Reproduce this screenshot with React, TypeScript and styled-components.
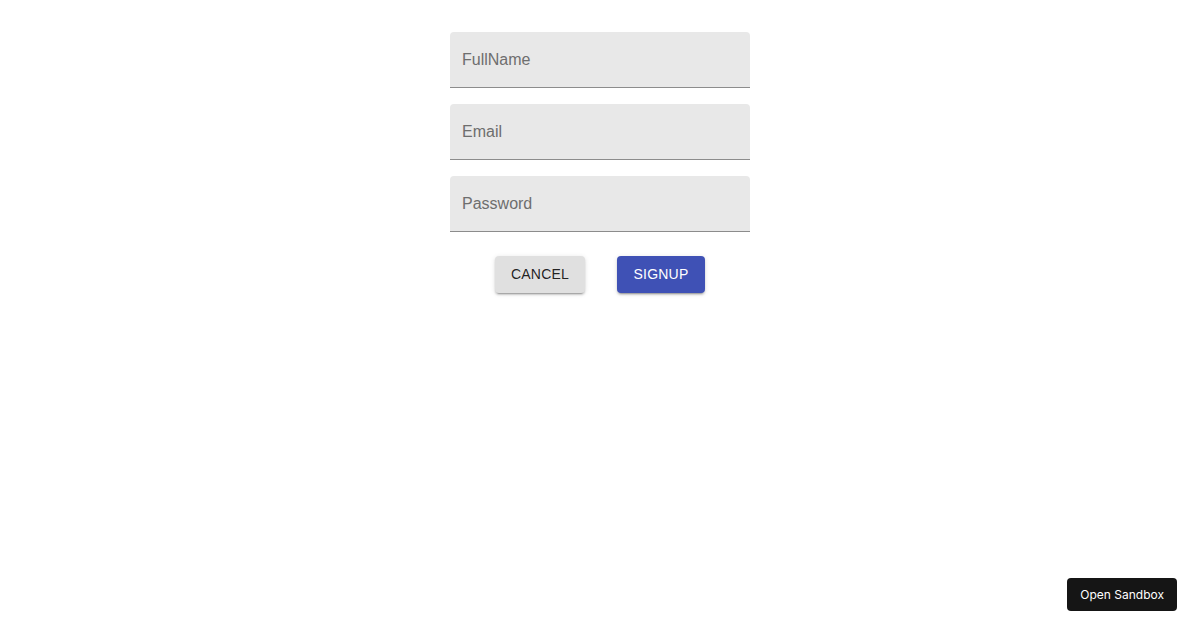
import React from "react";
import styled, { createGlobalStyle } from "styled-components";

const GlobalStyle = createGlobalStyle`
  html, body {
    margin: 0;
    padding: 0;
    background: #fff;
    font-family: "Liberation Sans", Arial, Helvetica, sans-serif;
  }
`;

const Page = styled.div`
  width: 1200px;
  height: 630px;
  position: relative;
  display: flex;
  flex-direction: column;
  align-items: center;
  padding-top: 32px;
  box-sizing: border-box;
`;

const Form = styled.form`
  width: 300px;
  display: flex;
  flex-direction: column;
  gap: 16px;
`;

const Field = styled.div`
  height: 56px;
  background: #e8e8e8;
  border-radius: 4px 4px 0 0;
  border-bottom: 1px solid #8c8c8c;
  box-sizing: border-box;
  display: flex;
  align-items: center;
  padding: 0 12px;
`;

const Label = styled.span`
  font-size: 16px;
  color: #6e6e6e;
  padding-top: 1px;
`;

const Actions = styled.div`
  display: flex;
  justify-content: center;
  gap: 32px;
  margin-top: 8px;
`;

const Button = styled.button<{ $primary?: boolean }>`
  height: 37px;
  min-width: 88px;
  padding: 0 16px 2px;
  border: none;
  border-radius: 4px;
  font-family: "Liberation Sans", Arial, sans-serif;
  font-size: 14px;
  letter-spacing: 0.2px;
  text-transform: uppercase;
  cursor: pointer;
  background: ${(p) => (p.$primary ? "#3f51b5" : "#e0e0e0")};
  color: ${(p) => (p.$primary ? "#fff" : "rgba(0,0,0,0.87)")};
  box-shadow: 0 3px 1px -2px rgba(0, 0, 0, 0.2), 0 2px 2px 0 rgba(0, 0, 0, 0.14),
    0 1px 5px 0 rgba(0, 0, 0, 0.12);
`;

const SandboxButton = styled.a`
  position: absolute;
  right: 23px;
  bottom: 19px;
  height: 33px;
  padding: 0 13px;
  display: flex;
  align-items: center;
  background: #151515;
  color: #fff;
  border-radius: 4px;
  font-family: Inter, "Liberation Sans", sans-serif;
  font-size: 12px;
  text-decoration: none;
`;

export default function App() {
  return (
    <>
      <GlobalStyle />
      <Page>
        <Form>
          <Field>
            <Label>FullName</Label>
          </Field>
          <Field>
            <Label>Email</Label>
          </Field>
          <Field>
            <Label>Password</Label>
          </Field>
          <Actions>
            <Button type="button">Cancel</Button>
            <Button type="button" $primary>
              Signup
            </Button>
          </Actions>
        </Form>
        <SandboxButton>Open Sandbox</SandboxButton>
      </Page>
    </>
  );
}
